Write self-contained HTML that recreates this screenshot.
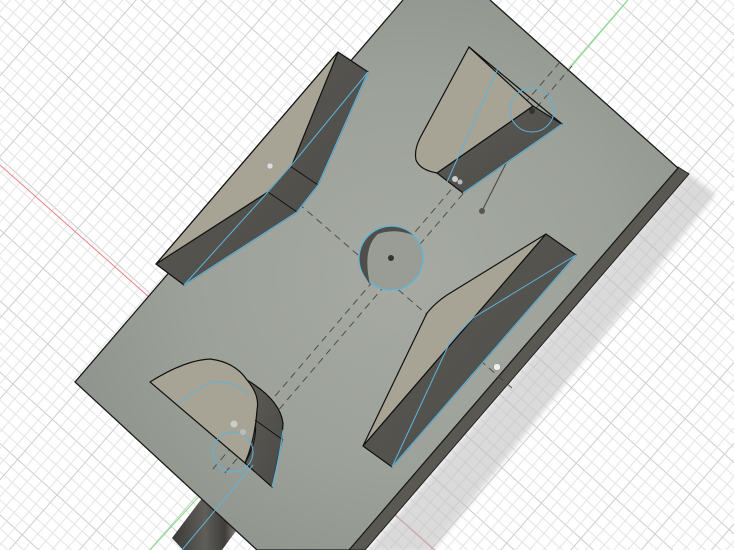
<!DOCTYPE html>
<html><head><meta charset="utf-8"><style>html,body{margin:0;padding:0;background:#fff;overflow:hidden}svg{display:block}</style></head>
<body>
<svg width="734" height="550" viewBox="0 0 734 550" xmlns="http://www.w3.org/2000/svg">
<defs>
<pattern id="gA" width="1000" height="53" patternUnits="userSpaceOnUse" patternTransform="translate(30,42) rotate(42)">
<g stroke="#e3e3e3" stroke-width="1"><line x1="0" y1="10.6" x2="1000" y2="10.6"/><line x1="0" y1="21.2" x2="1000" y2="21.2"/><line x1="0" y1="31.8" x2="1000" y2="31.8"/><line x1="0" y1="42.4" x2="1000" y2="42.4"/></g>
<line x1="0" y1="0.5" x2="1000" y2="0.5" stroke="#cdcdcd" stroke-width="1"/>
</pattern>
<pattern id="gB" width="1000" height="53" patternUnits="userSpaceOnUse" patternTransform="translate(30,42) rotate(131)">
<g stroke="#e3e3e3" stroke-width="1"><line x1="0" y1="10.6" x2="1000" y2="10.6"/><line x1="0" y1="21.2" x2="1000" y2="21.2"/><line x1="0" y1="31.8" x2="1000" y2="31.8"/><line x1="0" y1="42.4" x2="1000" y2="42.4"/></g>
<line x1="0" y1="0.5" x2="1000" y2="0.5" stroke="#cdcdcd" stroke-width="1"/>
</pattern>
<radialGradient id="pl" cx="0.55" cy="0.5" r="0.6">
<stop offset="0" stop-color="#a6aaa2"/><stop offset="0.6" stop-color="#9ca199"/><stop offset="1" stop-color="#8e938d"/>
</radialGradient>
<linearGradient id="dk" x1="0" y1="0" x2="1" y2="1"><stop offset="0" stop-color="#5d5c57"/><stop offset="1" stop-color="#4a4945"/></linearGradient>
<linearGradient id="sh" x1="0" y1="0" x2="1" y2="0"><stop offset="0" stop-color="#3a3936"/><stop offset="0.5" stop-color="#605e59"/><stop offset="0.8" stop-color="#3e3d3a"/><stop offset="1" stop-color="#8a8985"/></linearGradient>
<filter id="bl"><feGaussianBlur stdDeviation="2.5"/></filter>
</defs>
<rect width="734" height="550" fill="#fff"/>
<rect width="734" height="550" fill="url(#gA)"/>
<rect width="734" height="550" fill="url(#gB)"/>
<line x1="0" y1="165" x2="440" y2="555" stroke="#f08080" stroke-width="1"/>
<line x1="628" y1="0" x2="570" y2="68" stroke="#7de07d" stroke-width="1"/>
<line x1="150" y1="550" x2="203" y2="492" stroke="#7de07d" stroke-width="1"/>
<polygon points="688,173 716,194 432,552 366,552" fill="#bdbdbd" opacity="0.55" filter="url(#bl)"/>
<polygon points="203,497 238,528 222,550 183,550 172,538" fill="url(#sh)"/>
<polygon points="678,167 689,174 365,550 348,550" fill="#5a5852" stroke="#222" stroke-width="1"/>
<polygon points="403,0 490,0 678,168 349,550 257,550 75,382" fill="url(#pl)"/>
<polyline points="490,0 678,168 349,550 257,550 75,382 403,0" fill="none" stroke="#1a1a1a" stroke-width="1.3"/>
<g stroke="#3a3a3a" stroke-width="1" stroke-dasharray="7,5" fill="none" opacity="0.8">
<line x1="262" y1="172" x2="512" y2="388"/>
<line x1="560" y1="62" x2="212" y2="470"/>
<line x1="572" y1="66" x2="224" y2="474"/>
</g>
<line x1="532" y1="112" x2="482" y2="211" stroke="#444" stroke-width="1"/>
<circle cx="482" cy="211" r="3" fill="#555"/>
<polygon points="338,52 368,72 318,185 297,212 184,285 156,264" fill="url(#dk)" stroke="#111" stroke-width="1.2"/>
<polygon points="156,264 338,52 292,165 268,192" fill="#a7a395" stroke="#111" stroke-width="1.2"/>
<line x1="290" y1="166" x2="318" y2="185" stroke="#111"/>
<line x1="268" y1="192" x2="297" y2="212" stroke="#111"/>
<polyline points="368,72 318,185 297,212 184,285" fill="none" stroke="#5fb4dc" stroke-width="1.2"/>
<polyline points="368,72 290,167 268,192 184,285" fill="none" stroke="#5fb4dc" stroke-width="1"/>
<circle cx="270" cy="166" r="3" fill="#ddd" stroke="#999" stroke-width="0.5"/>
<polygon points="533,106 562,124 463,193 437,173" fill="url(#dk)" stroke="#111" stroke-width="1.2"/>
<path d="M469,47 L533,106 L437,173 Q420,170 416,160 Q414,150 420,138 Z" fill="#a7a395" stroke="#111" stroke-width="1.2"/>
<line x1="469" y1="47" x2="562" y2="124" stroke="#111" stroke-width="1.2"/>
<line x1="463" y1="193" x2="562" y2="124" stroke="#5fb4dc" stroke-width="1.2"/>
<line x1="498" y1="68" x2="447" y2="182" stroke="#5fb4dc" stroke-width="1"/>
<circle cx="532" cy="110" r="22" fill="none" stroke="#5fb4dc" stroke-width="1"/>
<circle cx="532" cy="111" r="3" fill="#333"/>
<circle cx="455" cy="179" r="3" fill="#ccc"/><circle cx="460" cy="182" r="2.5" fill="#bbb"/>
<circle cx="391" cy="258" r="32" fill="#999d96" stroke="#5fb4dc" stroke-width="1.3"/>
<path d="M364,275 A32,32 0 0 1 413,235 Q395,228 378,234 Q362,248 370,285 Z" fill="#4f4e4a"/>
<circle cx="391" cy="258" r="3" fill="#333"/>
<polygon points="546,234 576,255 392,467 363,446" fill="url(#dk)" stroke="#111" stroke-width="1.2"/>
<path d="M546,234 L447,295 Q435,303 427,313 L363,446 Z" fill="#a7a395" stroke="#111" stroke-width="1.2"/>
<line x1="392" y1="467" x2="576" y2="255" stroke="#5fb4dc" stroke-width="1.2"/>
<polyline points="576,255 473,318 450,342 392,467" fill="none" stroke="#5fb4dc" stroke-width="1"/>
<circle cx="497" cy="367" r="3.5" fill="#eee" stroke="#888" stroke-width="0.5"/>
<path d="M247,380 Q280,400 283,423 L282,440 L272,487 L245,463 Q258,440 255,420 Q257,395 247,380 Z" fill="url(#dk)" stroke="#111" stroke-width="1.2"/>
<path d="M150,382 Q185,360 210,359 Q235,362 247,380 Q260,395 257,410 Q255,440 245,463 Z" fill="#a7a395" stroke="#111" stroke-width="1.2"/>
<line x1="255" y1="420" x2="283" y2="440" stroke="#111"/>
<path d="M178,403 L210,382 Q235,380 249,395" fill="none" stroke="#5fb4dc" stroke-width="1"/>
<line x1="253" y1="465" x2="182" y2="550" stroke="#5fb4dc" stroke-width="1"/>
<path d="M272,487 Q280,455 283,430" fill="none" stroke="#5fb4dc" stroke-width="1.2"/>
<circle cx="233" cy="452" r="20" fill="none" stroke="#5fb4dc" stroke-width="1"/>
<circle cx="234" cy="424" r="3.5" fill="#ccc"/><circle cx="243" cy="432" r="3" fill="#bbb"/>
</svg>
</body></html>
